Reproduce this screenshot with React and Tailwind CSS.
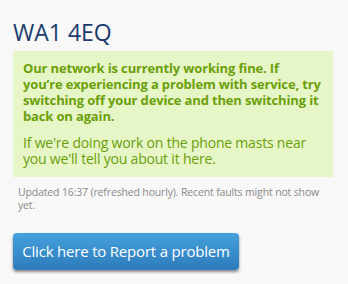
export default function App() {
  return (
    <div
      className="w-[348px] h-[284px] bg-[#f8f8f8] pt-[18px] px-[13px] overflow-hidden"
      style={{ fontFamily: "'Open Sans', sans-serif" }}
    >
      <h1 className="text-[23px] leading-[28px] text-[#1a3a6b] font-normal">WA1 4EQ</h1>
      <div className="mt-[5px] w-[320px] bg-[#e7f6c7] text-[#6aa00a] pl-[10px] pr-[2px] pt-[9px] pb-[10px]">
        <p className="font-bold text-[13px] leading-[16px] tracking-[-0.15px] whitespace-nowrap">
          Our network is currently working fine. If
          <br />
          you’re experiencing a problem with service, try
          <br />
          switching off your device and then switching it
          <br />
          back on again.
        </p>
        <p className="mt-[11px] text-[14px] leading-[16px] tracking-[-0.2px]">
          If we're doing work on the phone masts near you we'll tell you about it here.
        </p>
      </div>
      <p className="mt-[9px] pl-[5px] w-[320px] text-[10.5px] leading-[13px] text-[#8a8a8a] tracking-[-0.15px]">
        Updated 16:37 (refreshed hourly). Recent faults might not show yet.
      </p>
      <button className="mt-[21px] w-[226px] h-[37px] rounded-[4px] bg-gradient-to-b from-[#45a1dd] to-[#2d7bbb] text-white text-[15px] shadow-[0_2px_3px_rgba(0,0,0,0.45)] tracking-[-0.2px]">
        Click here to Report a problem
      </button>
    </div>
  );
}
